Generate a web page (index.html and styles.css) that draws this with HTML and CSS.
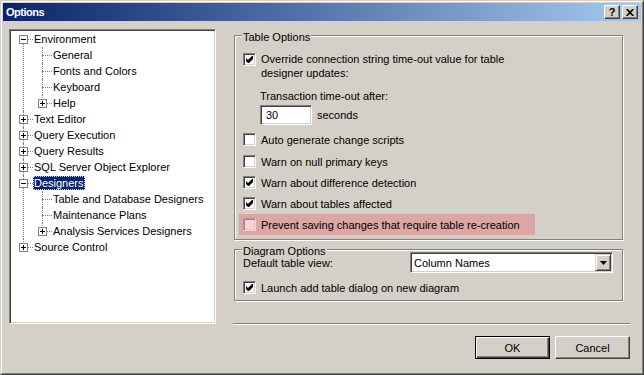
FILE: index.html
```html
<!DOCTYPE html>
<html>
<head>
<meta charset="utf-8">
<title>Options</title>
<link rel="stylesheet" href="styles.css">
</head>
<body>
<div class="window">
  <div class="frame">
    <div class="titlebar">
      <span class="title">Options</span>
      <div class="tbtns">
        <span class="tbtn">?</span>
        <span class="tbtn"><svg width="8" height="7" viewBox="0 0 8 7"><path d="M0.6 0 L7.4 7 M7.4 0 L0.6 7" stroke="#000" stroke-width="1.7"/></svg></span>
      </div>
    </div>

    <div class="main">
      <div class="tree">
        <ul class="lvl0">
          <li>
            <div class="node"><svg class="exp" width="9" height="9" viewBox="0 0 9 9"><rect x="0.5" y="0.5" width="8" height="8" fill="#fff" stroke="#808080"/><path d="M2 4.5h5" stroke="#000"/></svg><span class="lbl">Environment</span></div>
            <ul class="lvl1">
              <li><div class="node"><span class="lbl">General</span></div></li>
              <li><div class="node"><span class="lbl">Fonts and Colors</span></div></li>
              <li><div class="node"><span class="lbl">Keyboard</span></div></li>
              <li><div class="node"><svg class="exp" width="9" height="9" viewBox="0 0 9 9"><rect x="0.5" y="0.5" width="8" height="8" fill="#fff" stroke="#808080"/><path d="M2 4.5h5M4.5 2v5" stroke="#000"/></svg><span class="lbl">Help</span></div></li>
            </ul>
          </li>
          <li><div class="node"><svg class="exp" width="9" height="9" viewBox="0 0 9 9"><rect x="0.5" y="0.5" width="8" height="8" fill="#fff" stroke="#808080"/><path d="M2 4.5h5M4.5 2v5" stroke="#000"/></svg><span class="lbl">Text Editor</span></div></li>
          <li><div class="node"><svg class="exp" width="9" height="9" viewBox="0 0 9 9"><rect x="0.5" y="0.5" width="8" height="8" fill="#fff" stroke="#808080"/><path d="M2 4.5h5M4.5 2v5" stroke="#000"/></svg><span class="lbl">Query Execution</span></div></li>
          <li><div class="node"><svg class="exp" width="9" height="9" viewBox="0 0 9 9"><rect x="0.5" y="0.5" width="8" height="8" fill="#fff" stroke="#808080"/><path d="M2 4.5h5M4.5 2v5" stroke="#000"/></svg><span class="lbl">Query Results</span></div></li>
          <li><div class="node"><svg class="exp" width="9" height="9" viewBox="0 0 9 9"><rect x="0.5" y="0.5" width="8" height="8" fill="#fff" stroke="#808080"/><path d="M2 4.5h5M4.5 2v5" stroke="#000"/></svg><span class="lbl">SQL Server Object Explorer</span></div></li>
          <li>
            <div class="node"><svg class="exp" width="9" height="9" viewBox="0 0 9 9"><rect x="0.5" y="0.5" width="8" height="8" fill="#fff" stroke="#808080"/><path d="M2 4.5h5" stroke="#000"/></svg><span class="lbl sel">Designers</span></div>
            <ul class="lvl1">
              <li><div class="node"><span class="lbl">Table and Database Designers</span></div></li>
              <li><div class="node"><span class="lbl">Maintenance Plans</span></div></li>
              <li><div class="node"><svg class="exp" width="9" height="9" viewBox="0 0 9 9"><rect x="0.5" y="0.5" width="8" height="8" fill="#fff" stroke="#808080"/><path d="M2 4.5h5M4.5 2v5" stroke="#000"/></svg><span class="lbl">Analysis Services Designers</span></div></li>
            </ul>
          </li>
          <li><div class="node"><svg class="exp" width="9" height="9" viewBox="0 0 9 9"><rect x="0.5" y="0.5" width="8" height="8" fill="#fff" stroke="#808080"/><path d="M2 4.5h5M4.5 2v5" stroke="#000"/></svg><span class="lbl">Source Control</span></div></li>
        </ul>
      </div>

      <div class="right">
        <div class="group g1">
          <span class="legend">Table Options</span>
          <div class="cbrow multi">
            <span class="cb"><svg width="7" height="7" viewBox="0 0 7 7"><path d="M0 2 L2 4 L6 0 L7 0 L7 3 L3 7 L2 7 L0 5 Z" fill="#000"/></svg></span>
            <span class="txt">Override connection string time-out value for table<br>designer updates:</span>
          </div>
          <div class="sub">Transaction time-out after:</div>
          <div class="inputrow">
            <span class="input">30</span>
            <span class="seconds">seconds</span>
          </div>
          <div class="cbrow r-auto">
            <span class="cb"></span>
            <span class="txt">Auto generate change scripts</span>
          </div>
          <div class="cbrow r-null">
            <span class="cb"></span>
            <span class="txt">Warn on null primary keys</span>
          </div>
          <div class="cbrow">
            <span class="cb"><svg width="7" height="7" viewBox="0 0 7 7"><path d="M0 2 L2 4 L6 0 L7 0 L7 3 L3 7 L2 7 L0 5 Z" fill="#000"/></svg></span>
            <span class="txt">Warn about difference detection</span>
          </div>
          <div class="cbrow">
            <span class="cb"><svg width="7" height="7" viewBox="0 0 7 7"><path d="M0 2 L2 4 L6 0 L7 0 L7 3 L3 7 L2 7 L0 5 Z" fill="#000"/></svg></span>
            <span class="txt">Warn about tables affected</span>
          </div>
          <div class="cbrow hl">
            <span class="cb"></span>
            <span class="txt">Prevent saving changes that require table re-creation</span>
          </div>
        </div>

        <div class="group g2">
          <span class="legend">Diagram Options</span>
          <div class="comborow">
            <span class="txt">Default table view:</span>
            <div class="combo">
              <span class="combo-text">Column Names</span>
              <span class="ddbtn"><svg width="7" height="4" viewBox="0 0 7 4"><path d="M0 0h7L3.5 4z" fill="#000"/></svg></span>
            </div>
          </div>
          <div class="cbrow r-launch">
            <span class="cb"><svg width="7" height="7" viewBox="0 0 7 7"><path d="M0 2 L2 4 L6 0 L7 0 L7 3 L3 7 L2 7 L0 5 Z" fill="#000"/></svg></span>
            <span class="txt">Launch add table dialog on new diagram</span>
          </div>
        </div>

        <div class="sep"></div>
      </div>
    </div>

    <div class="footer">
      <button class="btn default">OK</button>
      <button class="btn">Cancel</button>
    </div>
  </div>
</div>
</body>
</html>
```

FILE: styles.css
```css
* { box-sizing: border-box; }
html, body { margin: 0; padding: 0; }
body {
  width: 644px;
  height: 375px;
  overflow: hidden;
  background: #d4d0c8;
  font-family: "Liberation Sans", Arial, sans-serif;
  font-size: 11px;
  color: #000;
}
.window {
  width: 644px;
  height: 375px;
  border: 1px solid;
  border-color: #d4d0c8 #404040 #404040 #d4d0c8;
}
.frame {
  height: 100%;
  border: 1px solid;
  border-color: #fff #808080 #808080 #fff;
  padding: 1px;
  display: flex;
  flex-direction: column;
}
.titlebar {
  height: 18px;
  flex: none;
  display: flex;
  align-items: center;
  justify-content: space-between;
  padding: 0 3px 0 3px;
  background: linear-gradient(to right, #0a246a, #a6caf0);
}
.title {
  color: #fff;
  font-weight: bold;
  font-size: 11px;
  letter-spacing: -0.5px;
  line-height: 14px;
}
.tbtns { display: flex; gap: 2px; }
.tbtn {
  width: 16px;
  height: 14px;
  display: flex;
  align-items: center;
  justify-content: center;
  background: #d4d0c8;
  border: 1px solid;
  border-color: #fff #404040 #404040 #fff;
  box-shadow: inset -1px -1px #808080;
  font-weight: bold;
  font-size: 11px;
  line-height: 12px;
}
.main {
  display: flex;
  align-items: flex-start;
  padding: 8px 0 0 6px;
}
.tree {
  width: 207px;
  height: 295px;
  flex: none;
  background: #fff;
  border: 1px solid;
  border-color: #808080 #fff #fff #808080;
  box-shadow: inset 1px 1px #404040, inset -1px -1px #d4d0c8;
  padding: 1px;
}
.tree ul { list-style: none; margin: 0; padding: 0; }
.tree .lvl1 { padding-left: 19px; }
.tree li { position: relative; }
.tree li::before {
  content: "";
  position: absolute;
  left: 12px;
  top: 0;
  bottom: 0;
  border-left: 1px dotted #808080;
}
.tree .lvl0 > li:first-child::before { top: 8px; }
.tree li:last-child::before { bottom: auto; height: 9px; }
.node {
  position: relative;
  display: flex;
  align-items: center;
  height: 16px;
}
.node::before {
  content: "";
  position: absolute;
  left: 12px;
  top: 8px;
  width: 10px;
  border-top: 1px dotted #808080;
}
.exp {
  position: absolute;
  left: 8px;
  top: 4px;
}
.lbl {
  margin-left: 22px;
  padding: 0 1px;
  line-height: 14px;
  white-space: nowrap;
}
.lbl.sel {
  background: #0a246a;
  color: #fff;
  outline: 1px dotted #d4d0c8;
  outline-offset: -1px;
}
.right {
  margin-left: 17px;
  width: 397px;
  flex: none;
  display: flex;
  flex-direction: column;
}
.group {
  position: relative;
  margin-left: 1px;
  width: 389px;
  border: 1px solid #808080;
  box-shadow: inset 1px 1px #fff, 1px 1px #fff;
  padding: 0 9px 0 8px;
}
.g1 { margin-top: 6px; height: 205px; padding-top: 16px; }
.g2 { margin-top: 9px; height: 52px; padding-top: 2px; }
.legend {
  position: absolute;
  top: -6px;
  left: 7px;
  padding: 0 1px;
  background: #d4d0c8;
  line-height: 14px;
}
.txt { line-height: 14px; white-space: nowrap; }
.cbrow {
  display: flex;
  align-items: center;
  height: 21px;
}
.cb {
  width: 13px;
  height: 13px;
  flex: none;
  margin-right: 5px;
  background: #fff;
  border: 1px solid;
  border-color: #808080 #fff #fff #808080;
  box-shadow: inset 1px 1px #404040, inset -1px -1px #d4d0c8;
  display: flex;
  align-items: center;
  justify-content: center;
}
.multi { height: auto; align-items: flex-start; }
.multi .cb { margin-top: 1px; }
.sub {
  padding-left: 17px;
  margin-top: 9px;
  line-height: 14px;
}
.inputrow {
  display: flex;
  align-items: center;
  padding-left: 17px;
  margin-top: 2px;
}
.input {
  width: 52px;
  height: 20px;
  background: #fff;
  border: 1px solid;
  border-color: #808080 #fff #fff #808080;
  box-shadow: inset 1px 1px #404040, inset -1px -1px #d4d0c8;
  padding-left: 5px;
  line-height: 18px;
}
.seconds { margin-left: 5px; }
.r-auto { margin-top: 4px; }
.r-null { margin-top: 1px; }
.hl {
  width: 296px;
  margin-left: -4px;
  padding-left: 4px;
  background: #dca6a4;
}
.hl .cb {
  background: #f3d6d5;
  border-color: #b89593 #f3d6d5 #f3d6d5 #b89593;
  box-shadow: inset 1px 1px #a58381, inset -1px -1px #e6c3c1;
}
.comborow {
  display: flex;
  align-items: center;
  height: 21px;
}
.combo {
  margin-left: auto;
  width: 203px;
  height: 21px;
  display: flex;
  align-items: center;
  padding: 1px;
  background: #fff;
  border: 1px solid;
  border-color: #808080 #fff #fff #808080;
  box-shadow: inset 1px 1px #404040, inset -1px -1px #d4d0c8;
}
.combo-text { flex: 1; padding-left: 2px; line-height: 14px; }
.ddbtn {
  width: 16px;
  height: 17px;
  flex: none;
  display: flex;
  align-items: center;
  justify-content: center;
  background: #d4d0c8;
  border: 1px solid;
  border-color: #d4d0c8 #404040 #404040 #d4d0c8;
  box-shadow: inset 1px 1px #fff, inset -1px -1px #808080;
}
.r-launch { margin-top: 4px; }
.sep {
  margin-top: 22px;
  height: 2px;
  border-top: 1px solid #808080;
  border-bottom: 1px solid #fff;
}
.footer {
  display: flex;
  justify-content: flex-end;
  gap: 5px;
  padding-right: 11px;
  margin-top: 11px;
}
.btn {
  width: 75px;
  height: 23px;
  padding: 0;
  margin: 0;
  font: inherit;
  color: #000;
  background: #d4d0c8;
  border: 1px solid;
  border-color: #fff #404040 #404040 #fff;
  box-shadow: inset -1px -1px #808080, inset 1px 1px #d4d0c8;
  border-radius: 0;
}
.btn.default {
  border-color: #000;
  box-shadow: inset 1px 1px #fff, inset -1px -1px #404040, inset -2px -2px #808080;
}
```
